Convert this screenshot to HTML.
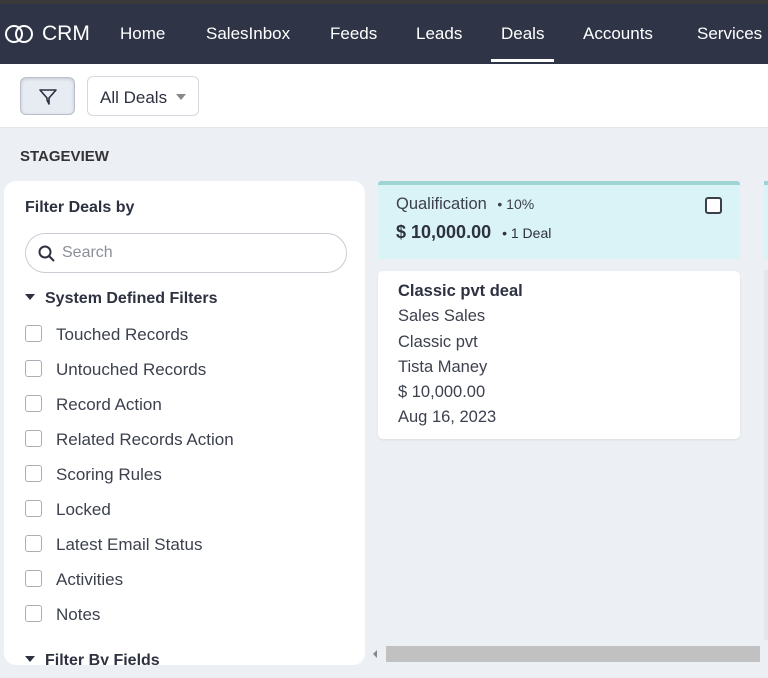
<!DOCTYPE html>
<html><head><style>
*{margin:0;padding:0;box-sizing:border-box}
body{width:768px;height:678px;overflow:hidden;background:#eceff4;font-family:"Liberation Sans",sans-serif;position:relative;color:#2d3140}
.top{position:absolute;left:0;top:0;width:768px;height:4px;background:#3a3a3a}
.nav{position:absolute;left:0;top:4px;width:768px;height:60px;background:#2f3546;color:#fff}
.nav span{position:absolute;top:20px;font-size:17px}
.tb{position:absolute;left:0;top:64px;width:768px;height:64px;background:#fff;border-bottom:1px solid #e2e5ea}
.fbtn{position:absolute;left:20px;top:77px;width:55px;height:38px;background:#e7ebf2;border:1px solid #b9c0cc;border-radius:6px;box-shadow:inset 0 1px 3px rgba(0,0,0,.15)}
.dd{position:absolute;left:87px;top:76px;width:112px;height:40px;border:1px solid #d4d8df;border-radius:6px;background:#fff;font-size:17px;padding:11px 0 0 12px;color:#2d3140}
.sv{position:absolute;left:20px;top:148px;font-size:15px;font-weight:bold;color:#333}
.panel{position:absolute;left:4px;top:181px;width:361px;height:484px;background:#fff;border-radius:12px;overflow:hidden}
.panel .h{position:absolute;left:21px;top:18px;font-size:16px;font-weight:bold}
.search{position:absolute;left:21px;top:52px;width:322px;height:40px;border:1px solid #c9cdd4;border-radius:20px;font-size:16px;color:#8a8f99;padding:10px 0 0 36px}
.sec{position:absolute;left:21px;font-size:16px;font-weight:bold;color:#2d3140}
.sec:before{content:"";display:inline-block;border-left:5px solid transparent;border-right:5px solid transparent;border-top:6px solid #2d3140;margin-right:10px;vertical-align:3px}
.it{position:absolute;left:21px;font-size:17px;color:#3c414d}
.it i{display:inline-block;width:17px;height:17px;border:1.5px solid #a9aeb7;border-radius:3px;vertical-align:-2px;margin-right:14px}
.col{position:absolute;left:378px;top:181px;width:362px;height:78px;background:#d9f3f6;border-top:4px solid #9ed5d4;border-radius:3px 3px 0 0}
.col2{position:absolute;left:764px;top:181px;width:10px;height:78px;background:#d9f3f6;border-top:4px solid #9ed5d4}
.col2b{position:absolute;left:764px;top:270px;width:10px;height:370px;background:#e3e6ec}
.card{position:absolute;left:378px;top:271px;width:362px;height:168px;background:#fff;border-radius:5px;box-shadow:0 1px 2px rgba(0,0,0,.08);padding:8px 20px;font-size:16.5px;line-height:25.3px;color:#3c414d}
.sb{position:absolute;left:386px;top:646px;width:374px;height:16px;background:#c1c1c1}
</style></head><body>
<div class="top"></div>
<div class="nav">
<svg style="position:absolute;left:3px;top:20px" width="32" height="20" viewBox="0 0 32 20"><circle cx="11" cy="10" r="8" fill="none" stroke="#fff" stroke-width="2"/><circle cx="21" cy="10" r="8" fill="none" stroke="#fff" stroke-width="2"/></svg>
<span style="left:42px;font-size:21px;top:18px">CRM</span>
<span style="left:120px">Home</span><span style="left:206px">SalesInbox</span><span style="left:330px">Feeds</span><span style="left:416px">Leads</span><span style="left:501px">Deals</span><span style="left:583px">Accounts</span><span style="left:697px">Services</span>
<div style="position:absolute;left:491px;top:55px;width:63px;height:3px;background:#fff"></div>
</div>
<div class="tb"></div>
<div class="fbtn"><svg style="position:absolute;left:17px;top:9px" width="20" height="20" viewBox="0 0 20 20"><path d="M2 3 H18 L11 11 V17 L9 13 V11 Z" fill="none" stroke="#2d3140" stroke-width="1.6" stroke-linejoin="round"/></svg></div>
<div class="dd">All Deals <span style="display:inline-block;border-left:5px solid transparent;border-right:5px solid transparent;border-top:6px solid #888;vertical-align:3px;margin-left:4px"></span></div>
<div class="sv">STAGEVIEW</div>
<div class="panel">
<div class="h">Filter Deals by</div>
<div class="search">Search<svg style="position:absolute;left:12px;top:11px" width="18" height="18" viewBox="0 0 18 18"><circle cx="7" cy="7" r="5.5" fill="none" stroke="#2d3140" stroke-width="2"/><path d="M11 11 L16 16" stroke="#2d3140" stroke-width="2"/></svg></div>
<div class="sec" style="top:109px">System Defined Filters</div>
<div class="it" style="top:144px"><i></i>Touched Records</div>
<div class="it" style="top:179px"><i></i>Untouched Records</div>
<div class="it" style="top:214px"><i></i>Record Action</div>
<div class="it" style="top:249px"><i></i>Related Records Action</div>
<div class="it" style="top:284px"><i></i>Scoring Rules</div>
<div class="it" style="top:319px"><i></i>Locked</div>
<div class="it" style="top:354px"><i></i>Latest Email Status</div>
<div class="it" style="top:389px"><i></i>Activities</div>
<div class="it" style="top:424px"><i></i>Notes</div>
<div class="sec" style="top:471px">Filter By Fields</div>
</div>
<div class="col">
<div style="position:absolute;left:18px;top:10px;font-size:16.5px;color:#3c414d">Qualification <span style="font-size:14px;margin-left:6px">• 10%</span></div>
<div style="position:absolute;left:18px;top:37px;font-size:18px;font-weight:bold;color:#2d3140">$ 10,000.00 <span style="font-size:14px;font-weight:normal;margin-left:6px">• 1 Deal</span></div>
<div style="position:absolute;left:327px;top:12px;width:17px;height:17px;border:2px solid #3a3f4a;border-radius:3px;background:#fff"></div>
</div>
<div class="col2"></div><div class="col2b"></div>
<div class="card"><b style="color:#2d3140">Classic pvt deal</b><br>Sales Sales<br>Classic pvt<br>Tista Maney<br>$ 10,000.00<br>Aug 16, 2023</div>
<div style="position:absolute;left:373px;top:650px;border-top:4px solid transparent;border-bottom:4px solid transparent;border-right:4px solid #888"></div>
<div class="sb"></div>
</body></html>
